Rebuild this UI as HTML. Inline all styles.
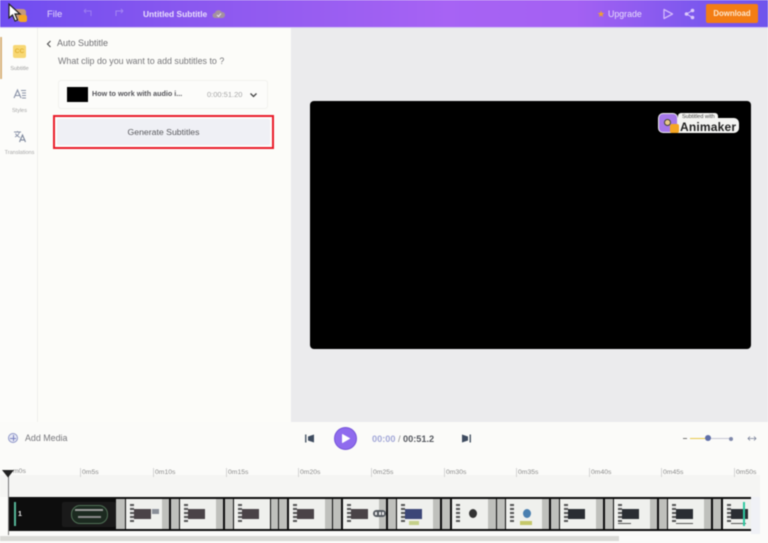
<!DOCTYPE html>
<html><head><meta charset="utf-8">
<style>
html,body{margin:0;padding:0;width:768px;height:543px;overflow:hidden;background:#fbfbf9;font-family:"Liberation Sans",sans-serif}
#w{position:absolute;left:0;top:0;width:768px;height:543px;overflow:hidden;filter:blur(.45px)}
.a{position:absolute}
.t{position:absolute;white-space:nowrap;line-height:1}
.tick{position:absolute;top:468px;height:9px;border-left:1px solid #d4d4d4;padding-left:1px;font-size:6.800px;line-height:9px;color:#8a8a8a;white-space:nowrap}
.g{position:absolute;top:499px;height:30px;background:#bfc0bc}
.th{position:absolute;top:499px;width:36px;height:30px;background:#eff0ed;overflow:hidden}
.th i{position:absolute;display:block}
.th .m{left:8px;top:10px;width:17px;height:10px;background:#4a4347}
.th .s{left:4px;top:5px;width:4px;height:18px;background:repeating-linear-gradient(#555 0 2px,#e8e8e8 2px 4px)}
</style></head>
<body><div id="w">
<!-- top bar -->
<div class="a" style="left:0;top:0;width:768px;height:27px;background:linear-gradient(90deg,#6f4df0 0%,#8a58ef 25%,#a763f4 58%,#a461f3 75%,#7e58ee 90%,#6f55ec 100%)"></div>
<div class="a" style="left:0;top:27px;width:768px;height:1px;background:#d6c8f5"></div>
<div class="a" style="left:13px;top:9px;width:13px;height:12px;background:#c79a7a;border-radius:3px"></div>
<div class="a" style="left:19px;top:15px;width:8px;height:7px;background:#f5a623;border-radius:2px"></div>
<svg class="a" style="left:7px;top:3px" width="16" height="20" viewBox="0 0 16 20"><path d="M2 1 L2 15 L5.500 12 L8 18 L10.500 17 L8 11 L13 11 Z" fill="#fff" stroke="#222" stroke-width="1.200"/></svg>
<div class="t" style="left:47px;top:10px;font-size:9.500px;color:#e3d6fb">File</div>
<svg class="a" style="left:82px;top:8px" width="12" height="10" viewBox="0 0 12 10"><path d="M2 3H9V8M2 3L4 1M2 3L4 5" fill="none" stroke="#9a7bf0" stroke-width="1"/></svg>
<svg class="a" style="left:113px;top:8px" width="12" height="10" viewBox="0 0 12 10"><path d="M10 3H3V8M10 3L8 1M10 3L8 5" fill="none" stroke="#a284f2" stroke-width="1"/></svg>
<div class="t" style="left:143px;top:10px;font-size:8.400px;color:#e9defc;font-weight:bold">Untitled Subtitle</div>
<svg class="a" style="left:212px;top:9px" width="13" height="10" viewBox="0 0 13 10"><path d="M3 9a2.500 2.500 0 0 1 0-5a3.500 3.500 0 0 1 6.500-1a3 3 0 0 1 1 6z" fill="#a4929f"/><path d="M5 6l1.500 1.500L9 4.500" fill="none" stroke="#e8e0e8" stroke-width="1"/></svg>
<div class="t" style="left:597px;top:10px;font-size:9px;color:#f0a030">★</div>
<div class="t" style="left:608px;top:10px;font-size:8.800px;color:#e8dcfc">Upgrade</div>
<svg class="a" style="left:662px;top:8px" width="12" height="12" viewBox="0 0 12 12"><path d="M2 1.500L10.500 6L2 10.500Z" fill="none" stroke="#d2b8fa" stroke-width="1.300" stroke-linejoin="round"/></svg>
<svg class="a" style="left:684px;top:8px" width="11" height="12" viewBox="0 0 11 12"><path d="M2.500 6L8.500 2.500M2.500 6L8.500 9.500" stroke="#dcc9fb" stroke-width="1"/><circle cx="2.500" cy="6" r="1.800" fill="#dcc9fb"/><circle cx="8.500" cy="2.500" r="1.800" fill="#dcc9fb"/><circle cx="8.500" cy="9.500" r="1.800" fill="#dcc9fb"/></svg>
<div class="a" style="left:706px;top:4px;width:52px;height:19px;background:#f37d14;border-radius:2px;color:#fde8cf;font-size:7.800px;font-weight:bold;line-height:20px;text-align:center">Download</div>

<!-- sidebar + panel -->
<div class="a" style="left:0;top:28px;width:38px;height:394px;background:#fcfcfa;border-right:1px solid #efefec;box-sizing:border-box"></div>
<div class="a" style="left:0;top:37px;width:2px;height:42px;background:#d9b27c"></div>
<div class="a" style="left:38px;top:28px;width:253px;height:394px;background:#fcfcf9"></div>
<div class="a" style="left:13px;top:45px;width:13px;height:13px;background:#f7d774;border-radius:2px;color:#e0b030;font-size:6.500px;font-weight:bold;line-height:13px;text-align:center">CC</div>
<div class="t" style="left:0;top:67px;width:39px;text-align:center;font-size:5.500px;color:#a0a0a0">Subtitle</div>
<svg class="a" style="left:13px;top:88px" width="14" height="12" viewBox="0 0 14 12"><path d="M1 10L4.500 2L8 10M2.300 7.500H6.700" fill="none" stroke="#8a93a8" stroke-width="1.100"/><path d="M8 2.500H13M9 5H13M9 7.500H13M9 10H13" stroke="#8a93a8" stroke-width="1"/></svg>
<div class="t" style="left:0;top:109px;width:39px;text-align:center;font-size:5.500px;color:#a6a6a6">Styles</div>
<svg class="a" style="left:13px;top:130px" width="14" height="13" viewBox="0 0 14 13"><path d="M1 2H8M4.500 1V2M2 7C4 6 6 4 6.500 2M2.500 3.500C3.500 5.500 5 6.500 7 7.500" fill="none" stroke="#8a93a8" stroke-width=".9"/><path d="M6.500 12L9.500 5L12.500 12M7.500 10H11.500" fill="none" stroke="#7c869c" stroke-width="1.100"/></svg>
<div class="t" style="left:0;top:151px;width:39px;text-align:center;font-size:5.500px;color:#a6a6a6">Translations</div>

<svg class="a" style="left:46px;top:40px" width="6" height="8" viewBox="0 0 6 8"><path d="M4.500 1L1.500 4L4.500 7" fill="none" stroke="#555" stroke-width="1.200"/></svg>
<div class="t" style="left:57px;top:39px;font-size:9px;color:#6f6f73">Auto Subtitle</div>
<div class="t" style="left:58px;top:57px;font-size:8.900px;color:#77777a">What clip do you want to add subtitles to ?</div>
<div class="a" style="left:58px;top:80px;width:210px;height:29px;background:#fcfcfa;border:1px solid #f1f1ee;border-radius:3px;box-sizing:border-box"></div>
<div class="a" style="left:67px;top:87px;width:21px;height:15px;background:#000"></div>
<div class="t" style="left:92px;top:90px;font-size:7.200px;font-weight:bold;color:#55555a">How to work with audio i...</div>
<div class="t" style="left:207px;top:91px;font-size:7.500px;color:#a8a8a8">0:00:51.20</div>
<svg class="a" style="left:249px;top:92px" width="9" height="7" viewBox="0 0 9 7"><path d="M1.500 1.500L4.500 4.500L7.500 1.500" fill="none" stroke="#444" stroke-width="1.300"/></svg>
<div class="a" style="left:53px;top:115px;width:221px;height:34px;border:2px solid #ea1c2a;box-sizing:border-box;padding:2px;background:#fcfcfa">
  <div style="width:100%;height:100%;background:#eff0f5;border-radius:2px;color:#5a5a5e;font-size:8.700px;line-height:26px;text-align:center">Generate Subtitles</div>
</div>

<!-- canvas -->
<div class="a" style="left:291px;top:28px;width:477px;height:394px;background:#ebebed"></div>
<div class="a" style="left:310px;top:101px;width:441px;height:248px;background:#000;border-radius:4px"></div>
<div class="a" style="left:660px;top:118px;width:79px;height:15px;background:#f4f4f2;border-radius:5px"></div>
<div class="a" style="left:678px;top:113px;width:40px;height:8px;background:#f4f4f2;border-radius:3px"></div>
<div class="a" style="left:658px;top:113px;width:20px;height:20px;background:#a678ea;border-radius:5px;border:1px solid #eee;box-sizing:border-box"></div>
<div class="a" style="left:664px;top:119px;width:7px;height:7px;background:#e9c98a;border-radius:50%;border:1px solid #443;box-sizing:border-box"></div>
<div class="a" style="left:670px;top:124px;width:9px;height:9px;background:#f5a623;border-radius:2px"></div>
<div class="t" style="left:682px;top:114.500px;font-size:5.500px;color:#444">Subtitled with</div>
<div class="t" style="left:680px;top:121px;font-size:12px;color:#222;font-weight:bold;letter-spacing:.2px">Animaker</div>

<!-- bottom -->
<div class="a" style="left:0;top:422px;width:768px;height:121px;background:#fbfbf9"></div>
<div class="a" style="left:8px;top:433px;width:10px;height:10px;border:1px solid #8f97c8;border-radius:50%;box-sizing:border-box;background:#e6e8f4"></div>
<div class="a" style="left:10px;top:437.500px;width:6px;height:1px;background:#7a82c0"></div>
<div class="a" style="left:12.500px;top:435px;width:1px;height:6px;background:#7a82c0"></div>
<div class="t" style="left:25px;top:434px;font-size:8.900px;color:#77777c">Add Media</div>
<svg class="a" style="left:304px;top:433px" width="11" height="11" viewBox="0 0 11 11"><path d="M1 1.500H2.500V9.500H1Z" fill="#54606f"/><path d="M10 1.500V9.500L4 7.500V3.500Z" fill="#3f4c60"/></svg>
<div class="a" style="left:334px;top:427px;width:23px;height:23px;background:#8f6bee;border-radius:50%;border:1px solid #7656d8;box-sizing:border-box"></div>
<svg class="a" style="left:341px;top:433px" width="10" height="11" viewBox="0 0 10 11"><path d="M1.500 1.500L8.500 5.500L1.500 9.500Z" fill="#fff" stroke="#fff" stroke-linejoin="round"/></svg>
<div class="t" style="left:372px;top:435px;font-size:9.200px;font-weight:bold;color:#a3a8d8">00:00</div>
<div class="t" style="left:398px;top:435px;font-size:9.200px;color:#8a8a8e">/</div>
<div class="t" style="left:403px;top:435px;font-size:9.200px;font-weight:bold;color:#55585f">00:51.2</div>
<svg class="a" style="left:461px;top:433px" width="11" height="11" viewBox="0 0 11 11"><path d="M1 1.500V9.500L7 7.500V3.500Z" fill="#3f4c60"/><path d="M8.500 1.500H10V9.500H8.500Z" fill="#54606f"/></svg>
<div class="a" style="left:683px;top:438px;width:4px;height:1px;background:#777"></div>
<div class="a" style="left:690px;top:438px;width:17px;height:1px;background:#e8c94c"></div>
<div class="a" style="left:710px;top:438px;width:20px;height:1px;background:#c8c8d4"></div>
<div class="a" style="left:705px;top:435px;width:6px;height:6px;background:#5f6fa8;border-radius:50%"></div>
<div class="a" style="left:729px;top:436.500px;width:4px;height:4px;background:#7f88aa;border-radius:50%"></div>
<svg class="a" style="left:747px;top:434px" width="10" height="9" viewBox="0 0 10 9"><path d="M1 4.500H9M3 2.500L1 4.500L3 6.500M7 2.500L9 4.500L7 6.500" fill="none" stroke="#7a8199" stroke-width=".8"/></svg>

<!-- ruler -->
<div class="a" style="left:0;top:475px;width:760px;height:22px;background:#f5f5f3"></div>
<div class="a" style="left:751px;top:497px;width:9px;height:37px;background:#f0f1f6"></div>
<div class="t" style="left:13px;top:469px;font-size:6.800px;color:#8a8a8a">m0s</div>
<div class="tick" style="left:80px">0m5s</div>
<div class="tick" style="left:153px">0m10s</div>
<div class="tick" style="left:226px">0m15s</div>
<div class="tick" style="left:298px">0m20s</div>
<div class="tick" style="left:371px">0m25s</div>
<div class="tick" style="left:444px">0m30s</div>
<div class="tick" style="left:516px">0m35s</div>
<div class="tick" style="left:589px">0m40s</div>
<div class="tick" style="left:661px">0m45s</div>
<div class="tick" style="left:734px">0m50s</div>

<!-- track -->
<div class="a" style="left:8px;top:497px;width:743px;height:34px;background:#0d0d0d"></div>
<div class="a" style="left:14px;top:502px;width:2px;height:24px;background:#55b596"></div>
<div class="t" style="left:18px;top:511px;font-size:7px;font-weight:bold;color:#e8e8e8">1</div>
<div class="a" style="left:62px;top:502px;width:54px;height:25px;background:#1a1a1a;border-radius:2px"></div>
<div class="a" style="left:71px;top:505px;width:37px;height:19px;background:#1c2a20;border:1px solid #4f6f55;border-radius:9px;box-sizing:border-box"></div>
<div class="a" style="left:75px;top:509px;width:28px;height:2px;background:#9a9a9a"></div>
<div class="a" style="left:78px;top:516px;width:23px;height:2px;background:#8a8a8a"></div>

<div class="g" style="left:116px;width:9px"></div><div class="th" style="left:126px"><i class="s"></i><i class="m"></i><i style="left:26px;top:10px;width:7px;height:5px;background:#8a8f98"></i></div><div class="g" style="left:162px;width:7px"></div>
<div class="g" style="left:171px;width:8px"></div><div class="th" style="left:180px"><i class="s"></i><i class="m"></i></div><div class="g" style="left:216px;width:7px"></div>
<div class="g" style="left:225px;width:8px"></div><div class="th" style="left:234px"><i class="s"></i><i class="m"></i></div><div class="g" style="left:271px;width:7px"></div>
<div class="g" style="left:279px;width:8px"></div><div class="th" style="left:289px"><i class="s"></i><i class="m"></i></div><div class="g" style="left:325px;width:7px"></div>
<div class="g" style="left:333px;width:8px"></div><div class="th" style="left:343px"><i class="s"></i><i class="m"></i></div><div class="g" style="left:379px;width:7px"></div>
<div class="g" style="left:388px;width:8px"></div><div class="th" style="left:397px"><i class="s"></i><i class="m" style="background:#3c4677"></i><i style="left:12px;top:22px;width:10px;height:4px;background:#c5d08a"></i></div><div class="g" style="left:433px;width:7px"></div>
<div class="g" style="left:442px;width:8px"></div><div class="th" style="left:452px"><i class="s"></i><i style="left:17px;top:10px;width:8px;height:9px;background:#333;border-radius:50%"></i></div><div class="g" style="left:488px;width:8px"></div>
<div class="g" style="left:497px;width:8px"></div><div class="th" style="left:506px"><i class="s"></i><i style="left:17px;top:10px;width:8px;height:9px;background:#4a7fb0;border-radius:50%"></i><i style="left:14px;top:22px;width:12px;height:4px;background:#c5c86a"></i></div><div class="g" style="left:542px;width:7px"></div>
<div class="g" style="left:551px;width:8px"></div><div class="th" style="left:560px"><i class="s"></i><i class="m" style="background:#2a2d33"></i></div><div class="g" style="left:596px;width:7px"></div>
<div class="g" style="left:605px;width:8px"></div><div class="th" style="left:614px"><i class="s"></i><i class="m" style="background:#2a2d33"></i><i style="left:4px;top:24px;width:13px;height:1px;background:#555"></i></div><div class="g" style="left:650px;width:7px"></div>
<div class="g" style="left:659px;width:8px"></div><div class="th" style="left:668px"><i class="s"></i><i class="m" style="background:#2a2d33"></i><i style="left:8px;top:24px;width:17px;height:1px;background:#555"></i></div><div class="g" style="left:704px;width:7px"></div>
<div class="g" style="left:713px;width:8px"></div><div class="th" style="left:723px;width:28px"><i class="s"></i><i class="m" style="background:#2a2d33"></i><i style="left:8px;top:24px;width:15px;height:1px;background:#555"></i></div>

<div class="a" style="left:373px;top:510px;width:13px;height:7px;background:#555a60;border-radius:4px"></div>
<div class="a" style="left:375px;top:512px;width:2px;height:3px;background:#e8e8e8"></div>
<div class="a" style="left:378.500px;top:512px;width:2px;height:3px;background:#e8e8e8"></div>
<div class="a" style="left:382px;top:512px;width:2px;height:3px;background:#e8e8e8"></div>
<div class="a" style="left:743px;top:502px;width:2px;height:24px;background:#2fc7a0"></div>

<!-- playhead -->
<div class="a" style="left:7.500px;top:474px;width:1px;height:61px;background:#777"></div>
<svg class="a" style="left:1px;top:469px" width="14" height="9" viewBox="0 0 14 9"><path d="M1 1H13L7 8.500Z" fill="#222"/></svg>

<!-- scrollbar -->
<div class="a" style="left:0;top:536px;width:619px;height:5px;background:#dadad6"></div>
</div></body></html>
